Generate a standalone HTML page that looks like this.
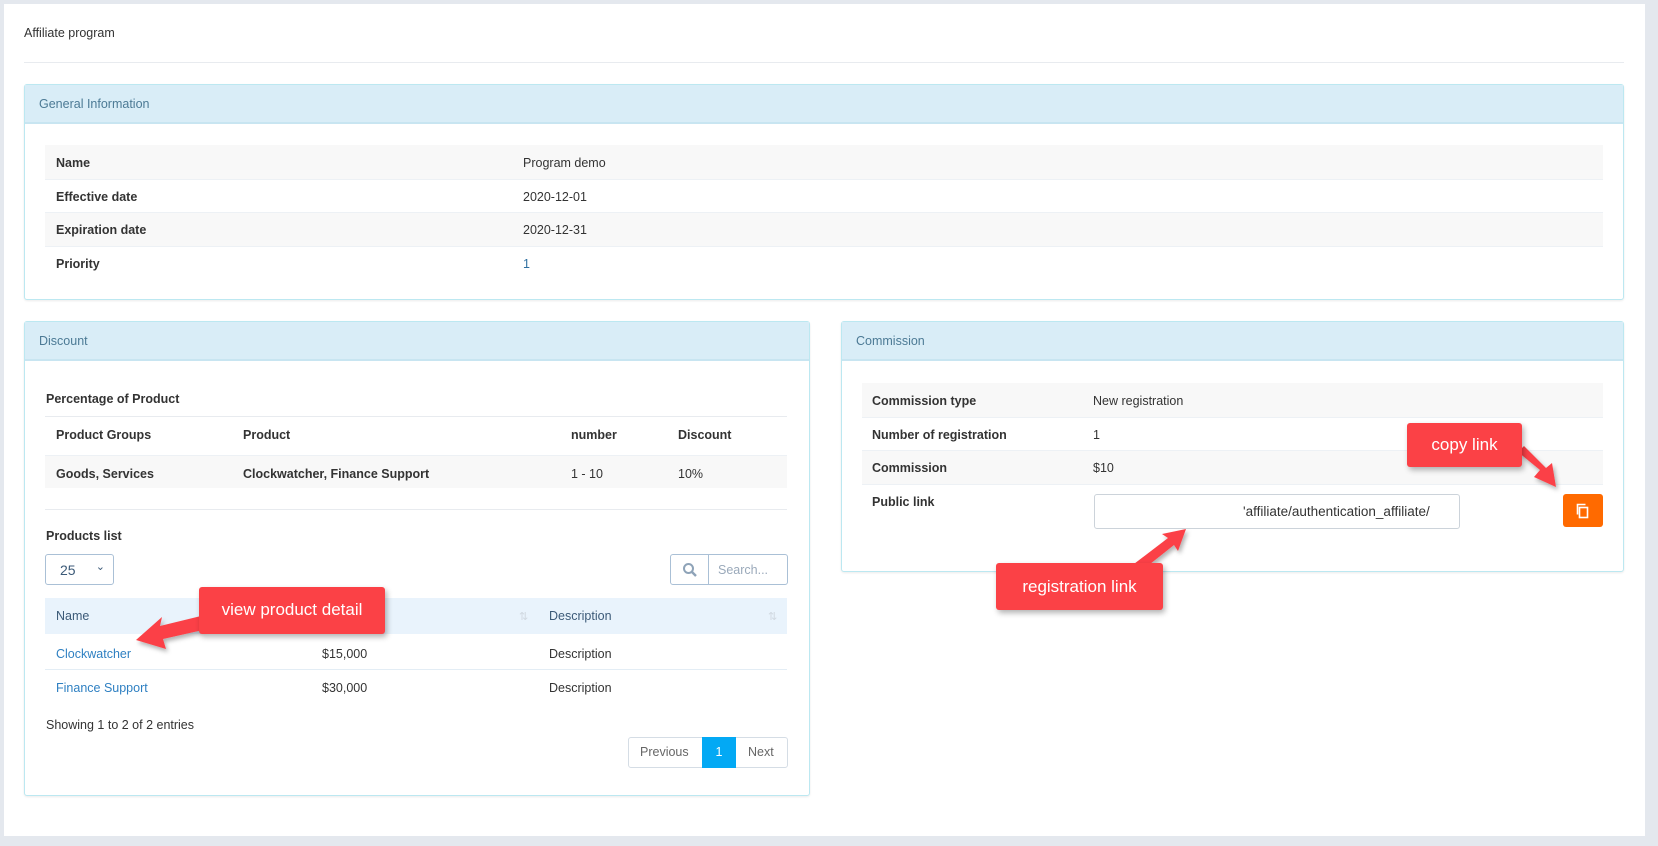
<!DOCTYPE html>
<html><head><meta charset="utf-8"><style>
*{box-sizing:border-box;margin:0;padding:0}
body{width:1658px;height:846px;background:#e4e8ee;font-family:"Liberation Sans",sans-serif;font-size:12.5px;color:#333;position:relative;overflow:hidden}
.card{position:absolute;left:4px;top:4px;width:1641px;height:832px;background:#fff}
.abs{position:absolute}
.t{position:absolute;white-space:nowrap;line-height:14px}
.panel{position:absolute;border:1px solid #bce8f1;border-radius:3px;background:#fff;box-shadow:0 1px 2px rgba(0,0,0,.08)}
.ph{position:absolute;left:0;right:0;top:0;height:39px;background:#d9edf7;border-bottom:2px solid #c8e5f1;color:#4c7a95;padding:12px 14px;font-size:12.5px}
.row{position:absolute;height:34px;border-top:1px solid #edf1f5}
.g{background:#f8f8f8}
.b{font-weight:bold;color:#333}
.link{color:#2f80c2}
.call{position:absolute;background:#fb4146;color:#fff;font-size:17px;border-radius:3px;text-align:center;box-shadow:2px 3px 6px rgba(0,0,0,.3)}
</style></head><body>
<div class="card"></div>
<div class="t" style="left:24px;top:26px;color:#333">Affiliate program</div>
<div class="abs" style="left:24px;top:62px;width:1600px;height:1px;background:#e8ebef"></div>

<div class="panel" style="left:24px;top:84px;width:1600px;height:216px"><div class="ph">General Information</div></div>
<div class="row g" style="left:45px;top:145px;width:1558px;border:none"></div>
<div class="row" style="left:45px;top:179px;width:1558px"></div>
<div class="row g" style="left:45px;top:212px;width:1558px"></div>
<div class="row" style="left:45px;top:246px;width:1558px"></div>
<div class="t b" style="left:56px;top:156px">Name</div><div class="t" style="left:523px;top:156px">Program demo</div>
<div class="t b" style="left:56px;top:190px">Effective date</div><div class="t" style="left:523px;top:190px">2020-12-01</div>
<div class="t b" style="left:56px;top:223px">Expiration date</div><div class="t" style="left:523px;top:223px">2020-12-31</div>
<div class="t b" style="left:56px;top:257px">Priority</div><div class="t" style="left:523px;top:257px;color:#2f6fa0">1</div>

<div class="panel" style="left:24px;top:321px;width:786px;height:475px"><div class="ph">Discount</div></div>
<div class="t b" style="left:46px;top:392px">Percentage of Product</div>
<div class="abs" style="left:45px;top:416px;width:742px;height:1px;background:#e8ebef"></div>
<div class="t b" style="left:56px;top:428px">Product Groups</div><div class="t b" style="left:243px;top:428px">Product</div><div class="t b" style="left:571px;top:428px">number</div><div class="t b" style="left:678px;top:428px">Discount</div>
<div class="row g" style="left:45px;top:455px;width:742px;height:33px"></div>
<div class="t b" style="left:56px;top:467px">Goods, Services</div><div class="t b" style="left:243px;top:467px">Clockwatcher, Finance Support</div><div class="t" style="left:571px;top:467px">1 - 10</div><div class="t" style="left:678px;top:467px">10%</div>
<div class="abs" style="left:45px;top:509px;width:742px;height:1px;background:#e8ebef"></div>
<div class="t b" style="left:46px;top:529px">Products list</div>
<div class="abs" style="left:45px;top:554px;width:69px;height:31px;border:1px solid #aac0d6;border-radius:3px;color:#3c5a78;font-size:14px;padding:7px 14px">25<span style="position:absolute;right:8px;top:5px;font-size:11px">&#8964;</span></div>
<div class="abs" style="left:670px;top:554px;width:118px;height:31px;border:1px solid #aac0d6;border-radius:3px"><div class="abs" style="left:37px;top:0;width:1px;height:29px;background:#aac0d6"></div>
<svg class="abs" style="left:11px;top:7px" width="16" height="16" viewBox="0 0 16 16"><circle cx="6.5" cy="6.5" r="4.5" fill="none" stroke="#8ea3b8" stroke-width="2"/><path d="M10 10l4 4" stroke="#8ea3b8" stroke-width="2.4"/></svg>
<div class="t" style="left:47px;top:8px;color:#9aa9ba">Search...</div></div>
<div class="abs" style="left:45px;top:598px;width:742px;height:36px;background:#e9f3fc"></div>
<div class="t" style="left:56px;top:609px;color:#3c5a78">Name</div><div class="t" style="left:549px;top:609px;color:#3c5a78">Description</div>
<div class="t" style="left:519px;top:610px;color:#d0d8e0;font-size:11px">⇅</div><div class="t" style="left:768px;top:610px;color:#d0d8e0;font-size:11px">⇅</div>
<div class="abs" style="left:45px;top:669px;width:742px;height:1px;background:#e3edf5"></div>
<div class="t link" style="left:56px;top:647px">Clockwatcher</div><div class="t" style="left:322px;top:647px">$15,000</div><div class="t" style="left:549px;top:647px">Description</div>
<div class="t link" style="left:56px;top:681px">Finance Support</div><div class="t" style="left:322px;top:681px">$30,000</div><div class="t" style="left:549px;top:681px">Description</div>
<div class="t" style="left:46px;top:718px">Showing 1 to 2 of 2 entries</div>
<div class="abs" style="left:628px;top:737px;width:160px;height:31px;border:1px solid #d5dde5;border-radius:3px"></div>
<div class="t" style="left:640px;top:745px;color:#666">Previous</div>
<div class="abs" style="left:702px;top:737px;width:34px;height:31px;background:#03a9f4;color:#fff;text-align:center;padding-top:8px">1</div>
<div class="t" style="left:748px;top:745px;color:#666">Next</div>

<div class="panel" style="left:841px;top:321px;width:783px;height:251px"><div class="ph">Commission</div></div>
<div class="row g" style="left:862px;top:383px;width:741px;border:none"></div>
<div class="row" style="left:862px;top:417px;width:741px"></div>
<div class="row g" style="left:862px;top:450px;width:741px"></div>
<div class="abs" style="left:862px;top:484px;width:741px;height:1px;background:#edf1f5"></div>
<div class="t b" style="left:872px;top:394px">Commission type</div><div class="t" style="left:1093px;top:394px">New registration</div>
<div class="t b" style="left:872px;top:428px">Number of registration</div><div class="t" style="left:1093px;top:428px">1</div>
<div class="t b" style="left:872px;top:461px">Commission</div><div class="t" style="left:1093px;top:461px">$10</div>
<div class="t b" style="left:872px;top:495px">Public link</div>
<div class="abs" style="left:1094px;top:494px;width:366px;height:35px;border:1px solid #ccd3da;border-radius:3px"></div>
<div class="t" style="left:1243px;top:505px;font-size:13.5px">'affiliate/authentication_affiliate/</div>
<div class="abs" style="left:1563px;top:494px;width:40px;height:33px;background:#ff6a00;border-radius:3px"></div>
<svg class="abs" style="left:1574px;top:502px" width="18" height="18" viewBox="0 0 18 18"><rect x="5.5" y="5.5" width="8" height="10" fill="none" stroke="#fff" stroke-width="1.6"/><path d="M3.5 12.5V2.5h8" fill="none" stroke="#fff" stroke-width="1.6"/></svg>

<svg class="abs" style="left:0;top:0" width="1658" height="846">
<defs><filter id="s"><feDropShadow dx="2" dy="3" stdDeviation="2" flood-opacity=".3"/></filter></defs>
<g fill="#fb4146" filter="url(#s)">
<path d="M201 616L160 626 162 617 136 640 166 649 163 639 203 630Z"/>
<path d="M1518 452L1540 470 1534 477 1556 487 1552 463 1546 468 1524 446Z"/>
<path d="M1130 567L1168 538 1162 534 1186 529 1178 551 1174 545 1140 572Z"/>
</g></svg>
<div class="call" style="left:199px;top:587px;width:186px;height:47px;padding-top:13px">view product detail</div>
<div class="call" style="left:1407px;top:423px;width:115px;height:44px;padding-top:12px">copy link</div>
<div class="call" style="left:996px;top:563px;width:167px;height:47px;padding-top:14px">registration link</div>
</body></html>
